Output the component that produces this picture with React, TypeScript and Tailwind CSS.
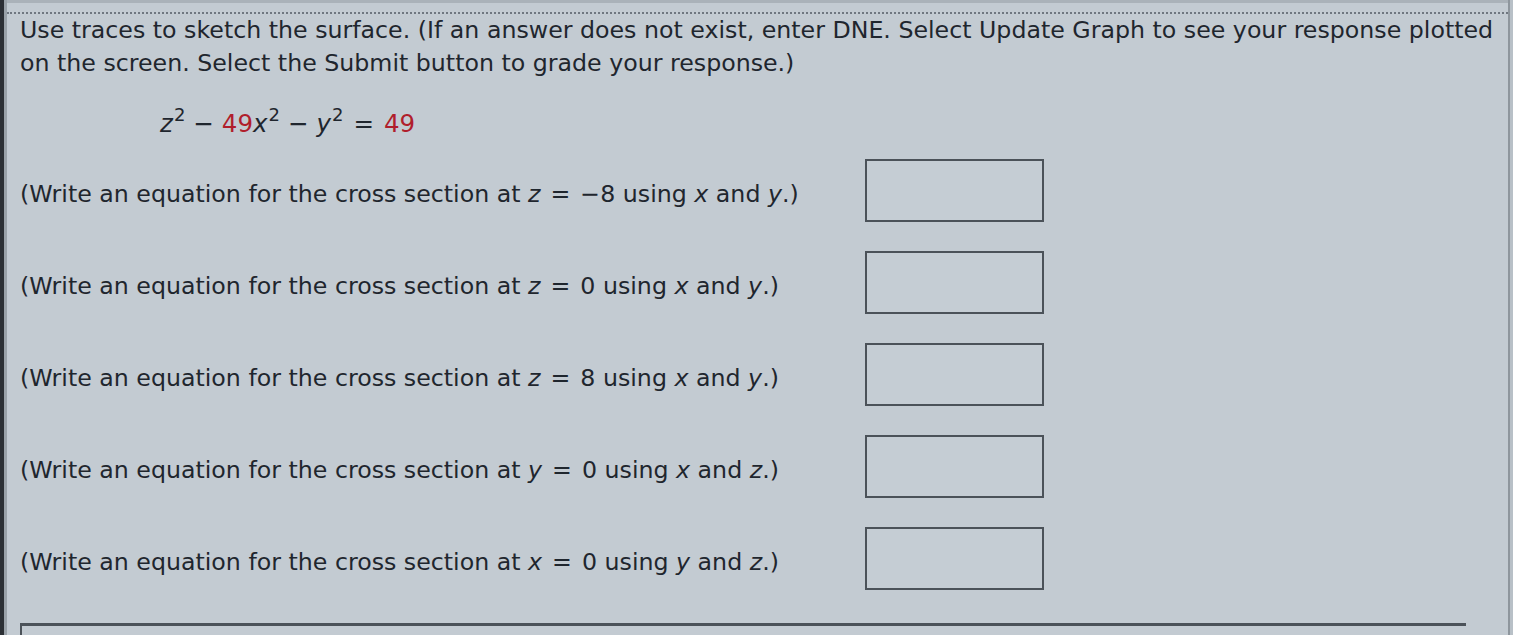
import React from "react";

const rows: { v: string; val: string; a: string; b: string }[] = [
  { v: "z", val: "\u22128", a: "x", b: "y" },
  { v: "z", val: "0", a: "x", b: "y" },
  { v: "z", val: "8", a: "x", b: "y" },
  { v: "y", val: "0", a: "x", b: "z" },
  { v: "x", val: "0", a: "y", b: "z" },
];

function Sup({ children }: { children: React.ReactNode }) {
  return <sup className="relative top-[-0.6em] ml-[1px] text-[18px]">{children}</sup>;
}

export default function App() {
  return (
    <div
      className="flex h-[635px] w-[1513px] overflow-hidden bg-[#c3cbd2] text-[#1f262e]"
      style={{ fontFamily: '"DejaVu Sans", Verdana, sans-serif' }}
    >
      <div className="w-[4px] shrink-0 bg-[#2c3035]" />
      <div className="w-[3px] shrink-0 bg-[#9aa2a9]" />
      <div className="flex min-w-0 flex-1 flex-col">
        <div className="h-[3px] shrink-0 bg-[#aab2b9]" />
        <div className="mt-[9px] border-t-2 border-dotted border-[#6f7780]" />
        <div className="flex flex-1 flex-col pl-[13px] pr-[2px]">
          <p className="mt-0 text-[23.7px] leading-[33px]">
            Use traces to sketch the surface. (If an answer does not exist, enter DNE. Select Update Graph to see your response plotted
            <br />
            on the screen. Select the Submit button to grade your response.)
          </p>
          <div className="mt-[29px] pl-[140px] text-[24.5px] leading-[30px]">
            <i>z</i>
            <Sup>2</Sup>
            <span className="mx-[8px]">&minus;</span>
            <span className="text-[#b01e2c]">49</span>
            <i>x</i>
            <Sup>2</Sup>
            <span className="mx-[8px]">&minus;</span>
            <i>y</i>
            <Sup>2</Sup>
            <span className="mx-[10px]">=</span>
            <span className="text-[#b01e2c]">49</span>
          </div>
          <div className="mt-[5px] flex flex-col">
            {rows.map((r, i) => (
              <div key={i} className="flex h-[92px] items-center">
                <div className="w-[845px] shrink-0 pt-[9px] text-[23.7px]">
                  (Write an equation for the cross section at <i>{r.v}</i>
                  <span className="mx-[10px]">=</span>
                  {r.val} using <i>{r.a}</i> and <i>{r.b}</i>.)
                </div>
                <div className="h-[63px] w-[179px] border-2 border-[#4b5259] bg-[#c5cdd4]" />
              </div>
            ))}
          </div>
          <div className="mt-[19px] h-[40px] w-[1446px] border-l-2 border-t-[3px] border-[#4b5259]" />
        </div>
      </div>
      <div className="w-[2px] shrink-0 bg-[#8e969d]" />
      <div className="w-[3px] shrink-0 bg-[#b8c0c7]" />
    </div>
  );
}
